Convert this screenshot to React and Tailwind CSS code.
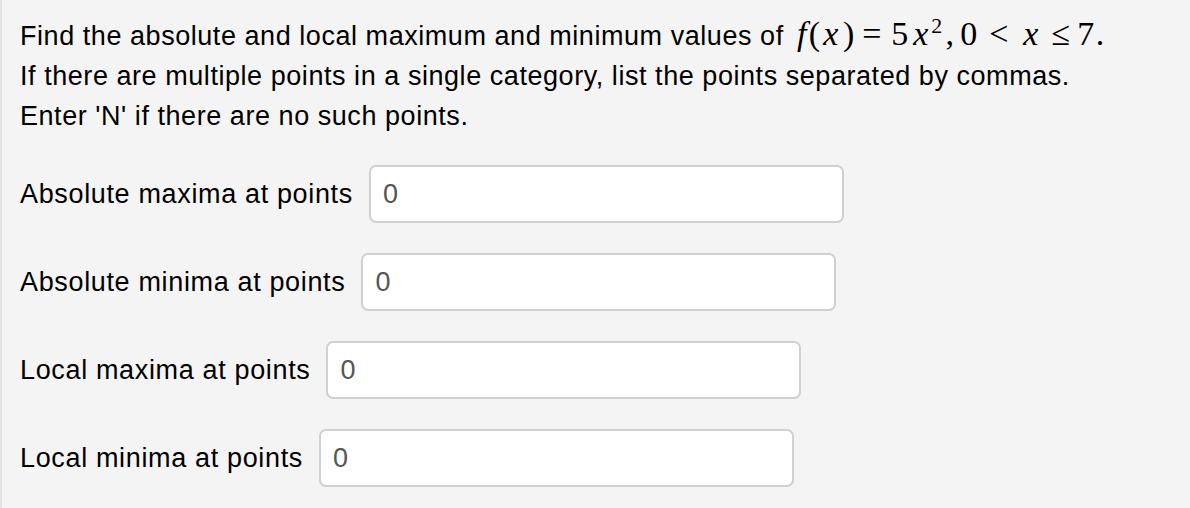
import React from 'react';

const rows = [
  'Absolute maxima at points',
  'Absolute minima at points',
  'Local maxima at points',
  'Local minima at points',
];

// f(x) = 5x², 0 < x ≤ 7.  set glyph by glyph, like the MathJax output
const FormulaPart = ({ w, italic, children }) => (
  <span className={`inline-block text-center ${w} ${italic ? 'italic' : ''}`}>{children}</span>
);

const Formula = () => (
  <span className="inline-flex items-baseline ml-[3px] font-['Liberation_Serif',serif] text-[34px] leading-none tracking-normal">
    <FormulaPart w="w-[14px]" italic>f</FormulaPart>
    <FormulaPart w="w-[11px]">(</FormulaPart>
    <FormulaPart w="w-[22px]" italic>x</FormulaPart>
    <FormulaPart w="w-[14px]">)</FormulaPart>
    <FormulaPart w="w-[32px]">=</FormulaPart>
    <FormulaPart w="w-[24px]">5</FormulaPart>
    <FormulaPart w="w-[18px]" italic>x</FormulaPart>
    <span className="inline-block w-[14px] text-center text-[22px] relative -top-[12px]">2</span>
    <FormulaPart w="w-[12px]">,</FormulaPart>
    <FormulaPart w="w-[26px]">0</FormulaPart>
    <FormulaPart w="w-[34px]">&lt;</FormulaPart>
    <FormulaPart w="w-[30px]" italic>x</FormulaPart>
    <FormulaPart w="w-[30px]">≤</FormulaPart>
    <FormulaPart w="w-[20px]">7</FormulaPart>
    <FormulaPart w="w-[8px]">.</FormulaPart>
  </span>
);

const App = () => {
  return (
    <div className="w-[1190px] h-[508px] overflow-hidden bg-[#f4f4f4] border-l-2 border-[#e4e4e4] font-['Liberation_Sans',Arial,sans-serif] text-black">
      <div className="pl-[18px] pt-[16px]">
        <div className="text-[27px] leading-[40px] tracking-[0.55px]">
          <p>
            Find the absolute and local maximum and minimum values of <Formula />
          </p>
          <p>If there are multiple points in a single category, list the points separated by commas.</p>
          <p>Enter 'N' if there are no such points.</p>
        </div>

        <div className="mt-[29px] flex flex-col gap-[30px]">
          {rows.map((label) => (
            <div key={label} className="flex items-center">
              <span className="text-[27px] tracking-[0.65px]">{label}</span>
              <input
                readOnly
                value="0"
                className="ml-4 w-[475px] h-[58px] bg-white border-2 border-[#d0d0d0] rounded-[7px] pl-3 text-[27px] text-[#555] outline-none"
              />
            </div>
          ))}
        </div>
      </div>
    </div>
  );
};

export default App;
